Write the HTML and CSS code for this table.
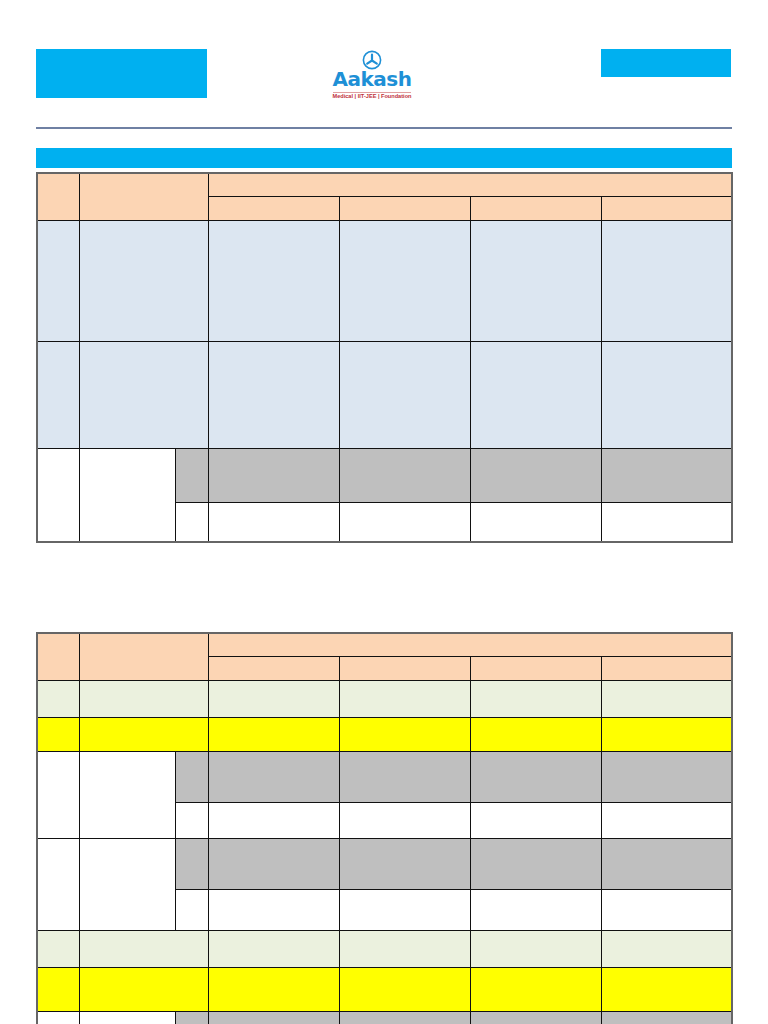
FILE: index.html
```html
<!DOCTYPE html>
<html>
<head>
<meta charset="utf-8">
<link rel="stylesheet" href="styles.css">
</head>
<body>
<div class="page">
  <header class="top">
    <div class="box-left"></div>
    <div class="logo">
      <svg class="logo-mark" width="20" height="20" viewBox="0 0 20 20">
        <circle cx="10" cy="10" r="8.6" fill="none" stroke="#1e90d6" stroke-width="1.6"/>
        <path d="M10 4.5 L10 10.5 M10 10.5 L5.2 13.6 M10 10.5 L14.8 13.6" stroke="#1e90d6" stroke-width="2.2" fill="none" stroke-linecap="round"/>
      </svg>
      <div class="logo-name">Aakash</div>
      <div class="logo-sub">Medical | IIT-JEE | Foundation</div>
    </div>
    <div class="box-right"></div>
  </header>
  <div class="rule"></div>
  <div class="bar"></div>

  <table class="grid t1">
    <colgroup>
      <col class="c1"><col class="c2"><col class="c3"><col class="c4"><col class="c4"><col class="c4"><col class="c4">
    </colgroup>
    <tr class="h1 peach"><td rowspan="2"></td><td rowspan="2" colspan="2"></td><td colspan="4"></td></tr>
    <tr class="h2 peach"><td></td><td></td><td></td><td></td></tr>
    <tr class="rA blue"><td></td><td colspan="2"></td><td></td><td></td><td></td><td></td></tr>
    <tr class="rB blue"><td></td><td colspan="2"></td><td></td><td></td><td></td><td></td></tr>
    <tr class="rC"><td rowspan="2"></td><td rowspan="2"></td><td class="gray"></td><td class="gray"></td><td class="gray"></td><td class="gray"></td><td class="gray"></td></tr>
    <tr class="rD"><td></td><td></td><td></td><td></td><td></td></tr>
  </table>

  <table class="grid t2">
    <colgroup>
      <col class="c1"><col class="c2"><col class="c3"><col class="c4"><col class="c4"><col class="c4"><col class="c4">
    </colgroup>
    <tr class="h1 peach"><td rowspan="2"></td><td rowspan="2" colspan="2"></td><td colspan="4"></td></tr>
    <tr class="h2 peach"><td></td><td></td><td></td><td></td></tr>
    <tr class="g1 green"><td></td><td colspan="2"></td><td></td><td></td><td></td><td></td></tr>
    <tr class="y1 yellow"><td></td><td colspan="2"></td><td></td><td></td><td></td><td></td></tr>
    <tr class="s1"><td rowspan="2"></td><td rowspan="2"></td><td class="gray"></td><td class="gray"></td><td class="gray"></td><td class="gray"></td><td class="gray"></td></tr>
    <tr class="w1"><td></td><td></td><td></td><td></td><td></td></tr>
    <tr class="s2"><td rowspan="2"></td><td rowspan="2"></td><td class="gray"></td><td class="gray"></td><td class="gray"></td><td class="gray"></td><td class="gray"></td></tr>
    <tr class="w2"><td></td><td></td><td></td><td></td><td></td></tr>
    <tr class="g2 green"><td></td><td colspan="2"></td><td></td><td></td><td></td><td></td></tr>
    <tr class="y2 yellow"><td></td><td colspan="2"></td><td></td><td></td><td></td><td></td></tr>
    <tr class="s3"><td rowspan="2"></td><td rowspan="2"></td><td class="gray"></td><td class="gray"></td><td class="gray"></td><td class="gray"></td><td class="gray"></td></tr>
    <tr class="w3"><td></td><td></td><td></td><td></td><td></td></tr>
  </table>
</div>
</body>
</html>
```

FILE: styles.css
```css
html, body {
  margin: 0;
  padding: 0;
  background: #ffffff;
  font-family: "Liberation Sans", Arial, sans-serif;
}

.page {
  width: 696px;
  margin-left: 36px;
  padding-top: 49px;
}

.top {
  display: flex;
  align-items: flex-start;
  height: 66px;
}

.box-left {
  width: 171px;
  height: 49px;
  background: #00b0f0;
}

.logo {
  margin-left: 126px;
  width: 78px;
  display: flex;
  flex-direction: column;
  align-items: center;
  margin-top: 1px;
}

.logo-mark {
  display: block;
}

.logo-name {
  font-family: "DejaVu Sans", "Liberation Sans", sans-serif;
  font-weight: bold;
  font-size: 20px;
  line-height: 20px;
  letter-spacing: -0.5px;
  color: #1e90d6;
  margin-top: -1px;
}

.logo-sub {
  font-family: "Liberation Sans", Arial, sans-serif;
  font-weight: bold;
  font-size: 5.6px;
  line-height: 7px;
  color: #c0303a;
  white-space: nowrap;
  margin-top: 3px;
  border-top: 0.5px solid #e0a0a0;
}

.box-right {
  margin-left: auto;
  margin-right: 1px;
  width: 130px;
  height: 28px;
  background: #00b0f0;
}

.rule {
  margin-top: 12px;
  height: 2px;
  background: #6f80a3;
}

.bar {
  margin-top: 19px;
  height: 20px;
  background: #00b0f0;
}

.grid {
  width: 696px;
  border-collapse: collapse;
  table-layout: fixed;
  border: 2px solid #666666;
}

.grid td {
  border: 1px solid #111111;
  padding: 0;
}

.c1 { width: 42px; }
.c2 { width: 96px; }
.c3 { width: 33px; }
.c4 { width: 131px; }

.t1 { margin-top: 4px; }
.t2 { margin-top: 89px; }

.peach td { background: #fcd5b4; }
.blue td { background: #dce6f1; }
.green td { background: #ebf1de; }
.yellow td { background: #ffff00; }
.grid td.gray { background: #bfbfbf; }

.h1 { height: 23px; }
.h2 { height: 24px; }

.rA { height: 121px; }
.rB { height: 107px; }
.rC { height: 54px; }
.rD { height: 40px; }

.g1 { height: 37px; }
.y1 { height: 34px; }
.s1 { height: 51px; }
.w1 { height: 36px; }
.s2 { height: 51px; }
.w2 { height: 41px; }
.g2 { height: 37px; }
.y2 { height: 44px; }
.s3 { height: 51px; }
.w3 { height: 40px; }
```
